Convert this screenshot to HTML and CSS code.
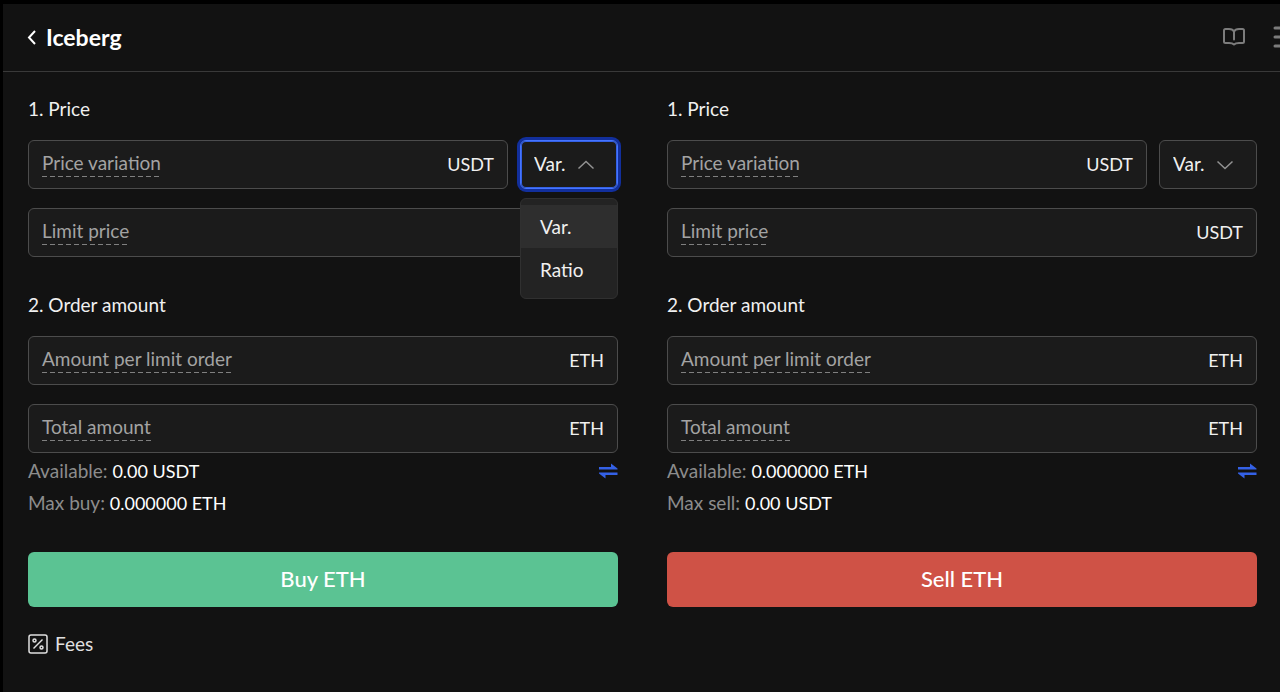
FILE: index.html
```html
<!DOCTYPE html>
<html lang="en">
<head>
    <meta charset="UTF-8">
    <meta name="viewport" content="width=device-width, initial-scale=1.0">
    <title>Iceberg</title>
    <link rel="stylesheet" href="styles.css">
</head>
<body>
    <div class="page">
        <header class="header">
            <a class="back" href="#" aria-label="Back">
                <svg width="10" height="16" viewBox="0 0 10 16"><path d="M8 2 2 8.500l6 6.500"/></svg>
            </a>
            <h1>Iceberg</h1>
            <button class="icon-button" type="button" aria-label="Guide">
                <svg width="24" height="20" viewBox="0 0 24 20"><path d="M12 4.500C11 2.500 9.500 2 7 2H3.500Q2 2 2 3.500V14.500Q2 16 3.500 16H7C9.500 16 11 16.500 12 17.500 13 16.500 14.500 16 17 16h3.500Q22 16 22 14.500V3.500Q22 2 20.500 2H17C14.500 2 13 2.500 12 4.500ZM12 4.500V12.500"/></svg>
            </button>
            <button class="icon-button menu-button" type="button" aria-label="Menu">
                <svg width="24" height="24" viewBox="0 0 24 24"><path d="M3 3h20M3 12h20M3 21h20"/></svg>
            </button>
        </header>

        <main class="columns">
            <!-- Buy side -->
            <form class="order">
                <section>
                    <h2>1. Price</h2>
                    <div class="row">
                        <div class="field">
                            <label for="buy-variation">Price variation</label>
                            <input id="buy-variation" type="text" inputmode="decimal">
                            <span>USDT</span>
                        </div>
                        <div class="dropdown open">
                            <select aria-label="Buy price type">
                                <option>Var.</option>
                                <option>Ratio</option>
                            </select>
                            <svg width="18" height="10" viewBox="0 0 18 10"><path d="M1.500 8.500 9 1.500l7.500 7"/></svg>
                            <ul class="options">
                                <li class="selected">Var.</li>
                                <li>Ratio</li>
                            </ul>
                        </div>
                    </div>
                    <div class="field">
                        <label for="buy-limit">Limit price</label>
                        <input id="buy-limit" type="text" inputmode="decimal">
                    </div>
                </section>
                <section>
                    <h2>2. Order amount</h2>
                    <div class="field">
                        <label for="buy-amount">Amount per limit order</label>
                        <input id="buy-amount" type="text" inputmode="decimal">
                        <span>ETH</span>
                    </div>
                    <div class="field">
                        <label for="buy-total">Total amount</label>
                        <input id="buy-total" type="text" inputmode="decimal">
                        <span>ETH</span>
                    </div>
                </section>
                <div class="balance">
                    <p>Available: <b>0.00 USDT</b></p>
                    <button class="transfer" type="button" aria-label="Transfer USDT">
                        <svg width="20" height="16" viewBox="0 0 20 16"><path d="M1 4H13V.5L19.500 5.500V6.500H1ZM19.500 12H7.500V15.500L1 10.500V9.500H19.500Z"/></svg>
                    </button>
                </div>
                <div class="balance"><p>Max buy: <b>0.000000 ETH</b></p></div>
                <button class="submit buy" type="button">Buy ETH</button>
                <a class="fees" href="#">
                    <svg width="20" height="20" viewBox="0 0 20 20"><rect x="1" y="1" width="18" height="18" rx="2"/><path d="m5.500 14.500 9-9"/><circle cx="6.500" cy="6.500" r="1.500"/><circle cx="13.500" cy="13.500" r="1.500"/></svg>
                    Fees
                </a>
            </form>

            <!-- Sell side -->
            <form class="order">
                <section>
                    <h2>1. Price</h2>
                    <div class="row">
                        <div class="field">
                            <label for="sell-variation">Price variation</label>
                            <input id="sell-variation" type="text" inputmode="decimal">
                            <span>USDT</span>
                        </div>
                        <div class="dropdown">
                            <select aria-label="Sell price type">
                                <option>Var.</option>
                                <option>Ratio</option>
                            </select>
                            <svg width="18" height="10" viewBox="0 0 18 10"><path d="M1.500 1.500 9 8.500l7.500-7"/></svg>
                        </div>
                    </div>
                    <div class="field">
                        <label for="sell-limit">Limit price</label>
                        <input id="sell-limit" type="text" inputmode="decimal">
                        <span>USDT</span>
                    </div>
                </section>
                <section>
                    <h2>2. Order amount</h2>
                    <div class="field">
                        <label for="sell-amount">Amount per limit order</label>
                        <input id="sell-amount" type="text" inputmode="decimal">
                        <span>ETH</span>
                    </div>
                    <div class="field">
                        <label for="sell-total">Total amount</label>
                        <input id="sell-total" type="text" inputmode="decimal">
                        <span>ETH</span>
                    </div>
                </section>
                <div class="balance">
                    <p>Available: <b>0.000000 ETH</b></p>
                    <button class="transfer" type="button" aria-label="Transfer ETH">
                        <svg width="20" height="16" viewBox="0 0 20 16"><path d="M1 4H13V.5L19.500 5.500V6.500H1ZM19.500 12H7.500V15.500L1 10.500V9.500H19.500Z"/></svg>
                    </button>
                </div>
                <div class="balance"><p>Max sell: <b>0.00 USDT</b></p></div>
                <button class="submit sell" type="button">Sell ETH</button>
            </form>
        </main>
    </div>
</body>
</html>
```
FILE: styles.css
```css
* {
    box-sizing: border-box;
}

body {
    margin: 0;
    padding: 4px 0 0 3px;
    background-color: #000;
    color: #f0f0f0;
    font-family: Lato, "Liberation Sans", sans-serif;
    font-size: 19px;
    line-height: 24px;
}

h1, h2, p, ul {
    margin: 0;
    padding: 0;
}

button, input, select {
    font: inherit;
    color: inherit;
    background: none;
    border: none;
    padding: 0;
    margin: 0;
}

button {
    cursor: pointer;
}

svg {
    display: block;
    flex-shrink: 0;
    fill: none;
    stroke: currentColor;
    stroke-width: 2;
}

.page {
    min-height: calc(100vh - 4px);
    background-color: #121212;
}

/* Header */
.header {
    display: flex;
    align-items: center;
    height: 68px;
    padding: 0 0 2px 24px;
    overflow: hidden;
    border-bottom: 1px solid #393939;
}

.back {
    color: #fff;
    margin-right: 9px;
}

.header h1 {
    flex: 1;
    color: #fff;
    font-size: 23px;
    line-height: 28px;
}

.icon-button {
    color: #7c7c7c;
    margin-right: 26px;
}

.icon-button svg {
    stroke-linecap: round;
    stroke-linejoin: round;
}

/* the menu icon runs off the right edge */
.menu-button {
    margin-right: -16px;
}

.menu-button svg {
    stroke-width: 3;
}

/* Order forms */
.columns {
    display: grid;
    grid-template-columns: 1fr 1fr;
    gap: 49px;
    padding: 25px 23px 25px 25px;
}

.order section {
    display: flex;
    flex-direction: column;
    gap: 19px;
}

.order section + section {
    margin-top: 36px;
}

.order h2 {
    font-size: 19px;
    font-weight: 400;
}

.row {
    display: flex;
    gap: 12px;
}

.row .field {
    flex: 1;
}

.field {
    display: flex;
    align-items: center;
    gap: 12px;
    height: 49px;
    padding: 0 13px 2px;
    background-color: #1b1b1b;
    border: 1px solid #4c4c4c;
    border-radius: 6px;
}

.field label {
    color: #a3a3a3;
    padding-bottom: 2px;
    background: repeating-linear-gradient(to right, #808080 0 5px, transparent 5px 8px) left bottom / 100% 1px no-repeat;
}

.field input {
    flex: 1;
    min-width: 0;
    outline: none;
}

.field span,
.balance b {
    font-size: 18px;
}

/* Var. / Ratio dropdown */
.dropdown {
    position: relative;
    display: grid;
    align-items: center;
    width: 98px;
    height: 49px;
}

.dropdown select,
.dropdown svg {
    grid-area: 1 / 1;
}

.dropdown select {
    appearance: none;
    width: 100%;
    height: 100%;
    padding: 0 13px 2px;
    background-color: #1b1b1b;
    border: 1px solid #4c4c4c;
    border-radius: 6px;
    outline: none;
}

.dropdown svg {
    justify-self: end;
    margin-right: 23px;
    color: #929292;
    stroke-width: 1.5;
    pointer-events: none;
}

.dropdown.open select {
    border-color: #4574ff;
    box-shadow: inset 0 0 0 1px #3461e6, 0 0 0 3px #122f9c;
}

.options {
    position: absolute;
    top: 58px;
    left: 0;
    right: 0;
    z-index: 1;
    padding: 6px 0 7px;
    list-style: none;
    background-color: #232323;
    border: 1px solid #303030;
    border-radius: 6px;
}

.options li {
    padding: 10px 19px 9px;
}

.options .selected {
    background-color: #2e2e2e;
}

/* Balances */
.balance {
    display: flex;
    justify-content: space-between;
    align-items: center;
    height: 32px;
    color: #8c8c8c;
}

.order section + .balance {
    margin-top: 2px;
}

.balance b {
    color: #fff;
    font-weight: 400;
}

.transfer svg {
    fill: #3461e6;
    stroke: none;
}

.submit {
    display: block;
    width: 100%;
    height: 55px;
    margin-top: 33px;
    padding-bottom: 2px;
    border-radius: 6px;
    color: #fff;
    font-size: 22px;
    font-weight: 500;
}

.buy {
    background-color: #5bc393;
}

.sell {
    background-color: #cf5246;
}

.fees {
    display: inline-flex;
    align-items: center;
    gap: 7px;
    margin-top: 25px;
    color: #e0e0e0;
    text-decoration: none;
}

.fees svg {
    stroke-width: 1.5;
}
```
